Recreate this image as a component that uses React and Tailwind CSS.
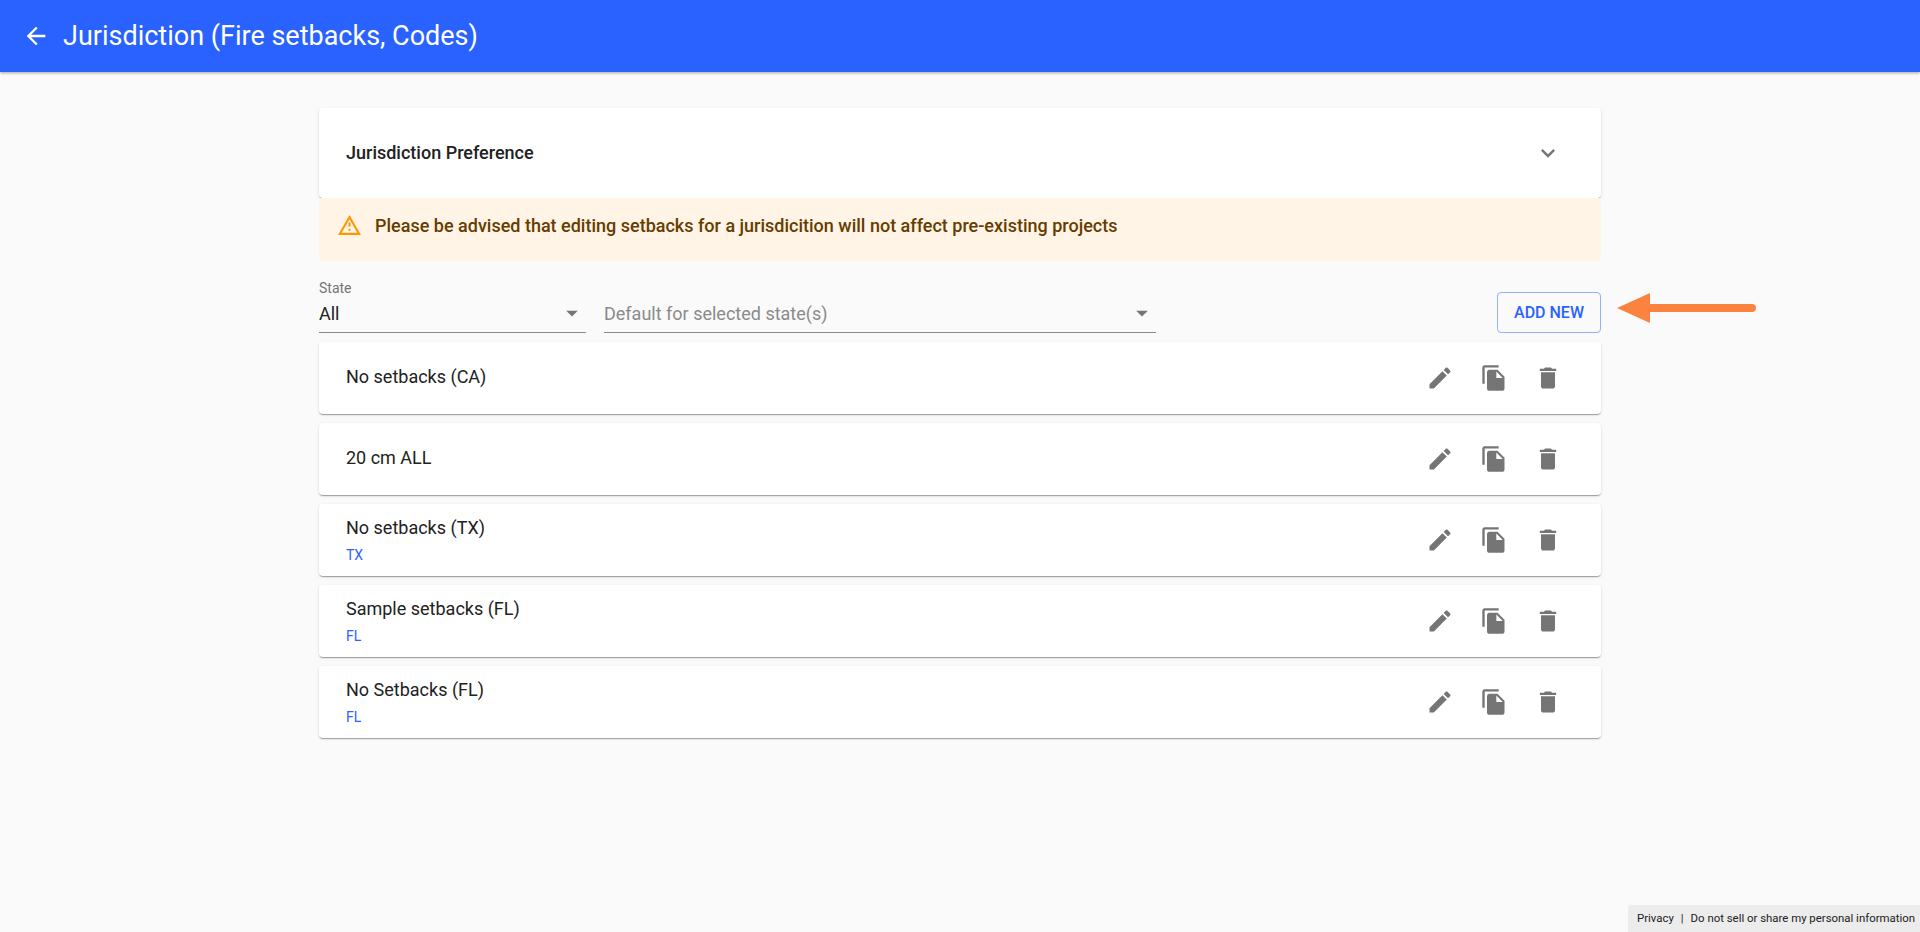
import React from 'react';

const ICONS = {
  back: 'M20 11H7.83l5.59-5.59L12 4l-8 8 8 8 1.41-1.41L7.83 13H20v-2z',
  expand: 'M16.59 8.59L12 13.17 7.41 8.59 6 10l6 6 6-6z',
  warning: 'M12 5.99L19.53 19H4.47L12 5.99M12 2L1 21h22L12 2zm1 13h-2v2h2v-2zm0-6h-2v4h2V9z',
  drop: 'M7 10l5 5 5-5z',
  edit: 'M3 17.25V21h3.75L17.81 9.94l-3.75-3.75L3 17.25zM20.71 7.04c.39-.39.39-1.02 0-1.41l-2.34-2.34c-.39-.39-1.02-.39-1.41 0l-1.83 1.83 3.75 3.75 1.83-1.83z',
  copy: 'M16 1H4c-1.1 0-2 .9-2 2v14h2V3h12V1zm-1 4l6 6v10c0 1.1-.9 2-2 2H7.99C6.89 23 6 22.1 6 21l.01-14c0-1.1.89-2 1.99-2h7zm-1 7h5.5L14 6.5V12z',
  trash: 'M6 19c0 1.1.9 2 2 2h8c1.1 0 2-.9 2-2V7H6v12zM19 4h-3.5l-1-1h-5l-1 1H5v2h14V4z',
};

const Icon = ({ name, className }) => (
  <svg viewBox="0 0 24 24" fill="currentColor" className={className}>
    <path d={ICONS[name]} />
  </svg>
);

const rows = [
  { name: 'No setbacks (CA)' },
  { name: '20 cm ALL' },
  { name: 'No setbacks (TX)', state: 'TX' },
  { name: 'Sample setbacks (FL)', state: 'FL' },
  { name: 'No Setbacks (FL)', state: 'FL' },
];

const cardShadow = 'shadow-[0_2px_1px_-1px_rgba(0,0,0,0.2),0_1px_1px_0_rgba(0,0,0,0.14),0_1px_3px_0_rgba(0,0,0,0.12)]';

const JurisdictionRow = ({ row }) => (
  <div className={`flex items-center h-[72px] bg-white rounded-[4px] pl-[27px] pr-[39px] ${cardShadow}`}>
    <div className={`flex-1 ${row.state ? 'pb-[1px]' : 'pb-[3px]'}`}>
      <div className="text-[18px] leading-[27px] text-[#212121]">{row.name}</div>
      {row.state && <div className="text-[14px] leading-[21px] mt-[4px] text-[#2962ff]">{row.state}</div>}
    </div>
    <div className="flex items-center gap-[26px] text-[#757575]">
      <Icon name="edit" className="w-[28px] h-[28px]" />
      <Icon name="copy" className="w-[28px] h-[28px]" />
      <Icon name="trash" className="w-[28px] h-[28px]" />
    </div>
  </div>
);

export default function App() {
  return (
    <div className="relative min-h-[932px] bg-[#fafafa] font-['Roboto',sans-serif]">
      <header className="flex items-center h-[72px] pl-[22px] bg-[#2962ff] text-white shadow-[0_1px_3px_rgba(0,0,0,0.35)]">
        <Icon name="back" className="w-[28px] h-[28px] mr-[13px]" />
        <h1 className="text-[27px] leading-none font-normal">Jurisdiction (Fire setbacks, Codes)</h1>
      </header>

      <main className="w-[1282px] mx-auto pt-[36px]">
        <div className={`flex items-center justify-between h-[90px] bg-white rounded-[4px] pl-[27px] pr-[39px] ${cardShadow}`}>
          <span className="text-[18px] font-medium text-[#212121] pb-[2px]">Jurisdiction Preference</span>
          <Icon name="expand" className="w-[28px] h-[28px] text-[#757575]" />
        </div>

        <div className="flex items-center h-[63px] bg-[#fff4e5] rounded-b-[4px] pl-[18px] pb-[9px]">
          <Icon name="warning" className="w-[25px] h-[25px] mr-[13px] text-[#ff9800]" />
          <span className="text-[18px] font-medium text-[#663c00]">Please be advised that editing setbacks for a jurisdicition will not affect pre-existing projects</span>
        </div>

        <div className="flex items-end h-[72px]">
          <div className="w-[267px] h-[54px] border-b border-[#8a8a8a]">
            <div className="text-[14px] leading-[18px] text-[#757575]">State</div>
            <div className="flex items-center justify-between h-[35px] pb-[3px]">
              <span className="text-[18px] text-[#212121]">All</span>
              <Icon name="drop" className="w-[28px] h-[28px] text-[#757575]" />
            </div>
          </div>
          <div className="flex items-center justify-between w-[552px] h-[36px] pb-[3px] ml-[18px] border-b border-[#8a8a8a]">
            <span className="text-[18px] text-[#8a8a8a]">Default for selected state(s)</span>
            <Icon name="drop" className="w-[28px] h-[28px] text-[#757575]" />
          </div>
          <button className="ml-auto w-[104px] h-[41px] rounded-[4px] border border-[#94b0ff] text-[16px] font-medium text-[#2962ff]">ADD NEW</button>
        </div>

        <div className="flex flex-col gap-[9px] mt-[9px]">
          {rows.map((row, index) => (
            <JurisdictionRow key={index} row={row} />
          ))}
        </div>
      </main>

      {/* annotation arrow drawn over the page */}
      <svg className="absolute left-[1617px] top-[292px]" width="140" height="32" viewBox="0 0 140 32">
        <path d="M0 16 L33 1 V12 H135 a4 4 0 0 1 0 8 H33 V31 Z" fill="#fb8340" />
      </svg>

      <div className="absolute right-0 bottom-0 flex items-center w-[292px] h-[27px] pl-[9px] bg-[#ececec] rounded-tl-[3px] text-[11.4px] text-[#212121] whitespace-nowrap">
        Privacy<span className="mx-[7px]">|</span>Do not sell or share my personal information
      </div>
    </div>
  );
}
